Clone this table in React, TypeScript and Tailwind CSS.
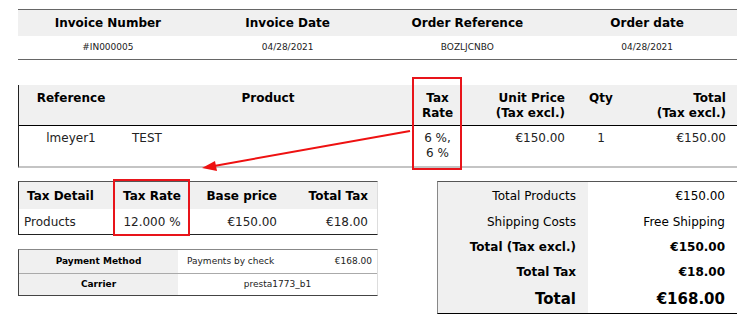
import React from 'react';

const font = { fontFamily: '"DejaVu Sans", Verdana, sans-serif' };

const invoiceInfo = [
  { label: 'Invoice Number', value: '#IN000005' },
  { label: 'Invoice Date', value: '04/28/2021' },
  { label: 'Order Reference', value: 'BOZLJCNBO' },
  { label: 'Order date', value: '04/28/2021' },
];

const totals = [
  { label: 'Total Products', value: '€150.00', cls: 'h-[27px] text-[12px] font-normal' },
  { label: 'Shipping Costs', value: 'Free Shipping', cls: 'h-[26px] text-[12px] font-normal' },
  { label: 'Total (Tax excl.)', value: '€150.00', cls: 'h-[23px] text-[12px] font-bold' },
  { label: 'Total Tax', value: '€18.00', cls: 'h-[27px] text-[12px] font-bold' },
  { label: 'Total', value: '€168.00', cls: 'h-[28px] text-[15px] font-bold' },
];

function InvoiceHeader() {
  return (
    <div className="w-[719px] border-t border-b border-t-[#666] border-b-[#666]">
      <div className="grid grid-cols-4 bg-[#f0f0f0] h-[26px] items-center">
        {invoiceInfo.map((c) => (
          <div key={c.label} className="text-center text-[12px] font-bold text-black">{c.label}</div>
        ))}
      </div>
      <div className="grid grid-cols-4 h-[23px] items-center">
        {invoiceInfo.map((c) => (
          <div key={c.label} className="text-center text-[9px] text-[#222]">{c.value}</div>
        ))}
      </div>
    </div>
  );
}

function ProductTable() {
  const cols = 'grid grid-cols-[104px_290px_49px_109px_60px_107px]';
  return (
    <div className="w-[719px] mt-[25px] border-l border-l-[#222] border-b-2 border-b-[#c4c4c4]">
      <div className={`${cols} bg-[#f0f0f0] h-[41px] pt-[6px] text-[12px] font-bold text-black leading-[15px] border-b border-b-black`}>
        <div className="text-center">Reference</div>
        <div className="text-center">Product</div>
        <div className="text-center">Tax<br />Rate</div>
        <div className="text-right pr-[6px]">Unit Price<br />(Tax excl.)</div>
        <div className="text-center">Qty</div>
        <div className="text-right pr-[12px]">Total<br />(Tax excl.)</div>
      </div>
      <div className={`${cols} h-[40px] pt-[5px] text-[12px] text-[#222] leading-[15px]`}>
        <div className="text-center">lmeyer1</div>
        <div className="pl-[9px]">TEST</div>
        <div className="text-center">6 %,<br />6 %</div>
        <div className="text-right pr-[6px]">€150.00</div>
        <div className="text-center">1</div>
        <div className="text-right pr-[12px]">€150.00</div>
      </div>
    </div>
  );
}

function TaxTable() {
  const cols = 'grid grid-cols-[95px_76px_94px_95px]';
  return (
    <div className="w-[360px] border-t border-t-[#555] border-l border-l-[#222] border-b border-b-[#222] border-r border-r-[#ddd]">
      <div className={`${cols} bg-[#f0f0f0] h-[27px] items-center text-[12px] font-bold text-black`}>
        <div className="pl-[8px]">Tax Detail</div>
        <div className="text-center">Tax Rate</div>
        <div className="text-right pr-[7px]">Base price</div>
        <div className="text-right pr-[11px]">Total Tax</div>
      </div>
      <div className={`${cols} h-[25px] items-center text-[12px] text-[#222]`}>
        <div className="pl-[5px]">Products</div>
        <div className="text-center">12.000 %</div>
        <div className="text-right pr-[7px]">€150.00</div>
        <div className="text-right pr-[11px]">€18.00</div>
      </div>
    </div>
  );
}

function PaymentTable() {
  return (
    <div className="w-[360px] mt-[14px] border-t border-t-[#888] border-l border-l-[#444] border-b border-b-[#444] border-r border-r-[#ddd] text-[9px]">
      <div className="flex h-[24px] border-b border-b-[#aaa]">
        <div className="w-[159px] bg-[#f0f0f0] flex items-center justify-center font-bold text-black">Payment Method</div>
        <div className="flex-1 flex items-center justify-between pl-[9px] pr-[5px] text-[#222]">
          <span>Payments by check</span>
          <span>€168.00</span>
        </div>
      </div>
      <div className="flex h-[21px]">
        <div className="w-[159px] bg-[#f0f0f0] flex items-center justify-center font-bold text-black">Carrier</div>
        <div className="flex-1 flex items-center justify-center text-[#222]">presta1773_b1</div>
      </div>
    </div>
  );
}

function TotalsTable() {
  return (
    <div className="w-[300px] border-t border-t-[#555] border-l border-l-[#888] border-b border-b-black">
      {totals.map((r) => (
        <div key={r.label} className={`flex ${r.cls} text-black`}>
          <div className="w-[150px] bg-[#f0f0f0] flex items-center justify-end pr-[12px]">{r.label}</div>
          <div className="flex-1 flex items-center justify-end pr-[12px]">{r.value}</div>
        </div>
      ))}
    </div>
  );
}

export default function App() {
  return (
    <div className="relative w-[755px] h-[329px] bg-white overflow-hidden pt-[9px] pl-[18px]" style={font}>
      <InvoiceHeader />
      <ProductTable />
      <div className="flex mt-[13px]">
        <div className="flex flex-col">
          <TaxTable />
          <PaymentTable />
        </div>
        <div className="ml-[59px]">
          <TotalsTable />
        </div>
      </div>

      {/* annotations */}
      <div className="absolute left-[412px] top-[77px] w-[50px] h-[93px] border-2 border-[#e8141a]" />
      <div className="absolute left-[113px] top-[179px] w-[77px] h-[57px] border-2 border-[#e8141a]" />
      <svg className="absolute left-0 top-0 pointer-events-none" width="755" height="329">
        <line x1="410" y1="131" x2="214" y2="166" stroke="#ee1111" strokeWidth="2" />
        <polygon points="202,168 215,161 217,171" fill="#ee1111" />
      </svg>
    </div>
  );
}
